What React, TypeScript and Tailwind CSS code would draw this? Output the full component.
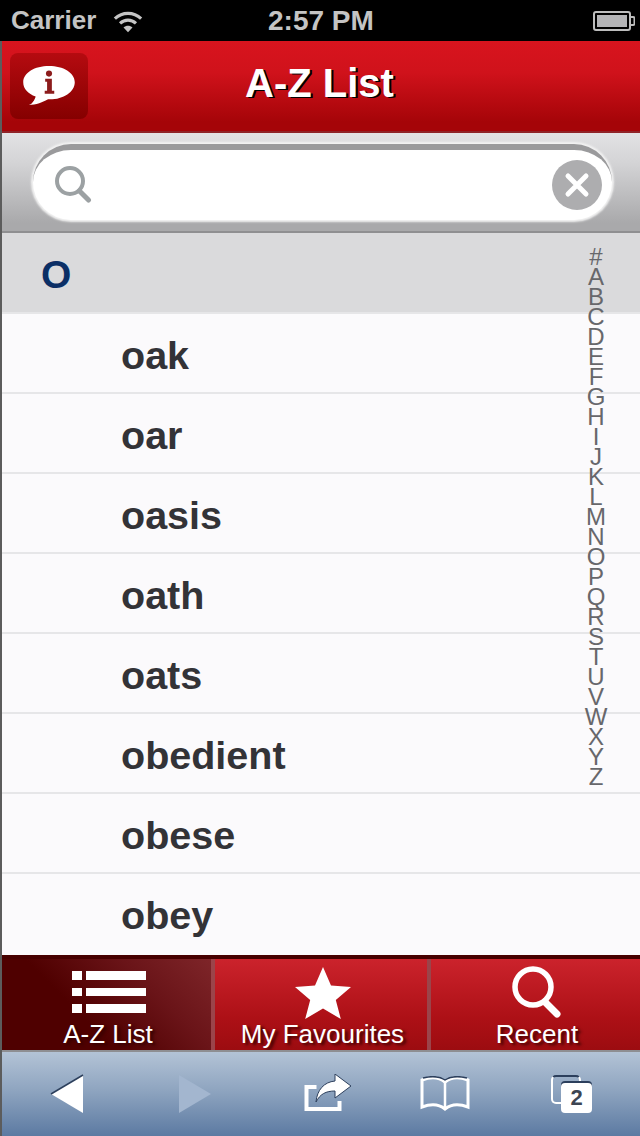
const words = ["oak", "oar", "oasis", "oath", "oats", "obedient", "obese", "obey"];
const letters = "#ABCDEFGHIJKLMNOPQRSTUVWXYZ".split("");

const sans = "font-['Liberation_Sans',Arial,sans-serif]";

function Wifi() {
  return (
    <svg width="30" height="24" viewBox="0 0 32 24" fill="none" stroke="#c4c4c4" strokeWidth="3.4">
      <path d="M2 9.5C10 2 22 2 30 9.5" />
      <path d="M7.5 14.5C12.5 10 19.5 10 24.5 14.5" />
      <path d="M16 24l-4.800-5.200C14 16.400 18 16.400 20.800 18.800z" fill="#c4c4c4" stroke="none" />
    </svg>
  );
}

function Battery() {
  return (
    <svg width="42" height="22" viewBox="0 0 42 22">
      <rect x="1" y="2" width="36" height="18" rx="2" fill="none" stroke="#bdbdbd" strokeWidth="2" />
      <rect x="4" y="5" width="30" height="12" fill="#b4b4b6" />
      <path d="M38 7h2a1.500 1.500 0 0 1 1.500 1.500v5A1.500 1.500 0 0 1 40 15h-2" fill="none" stroke="#bdbdbd" strokeWidth="2" />
    </svg>
  );
}

function InfoBubble() {
  return (
    <svg width="54" height="42" viewBox="0 0 56 44">
      <path d="M28 1C13 1 1 8 1 18c0 7 5 12 13 15-1 4-4 8-7 9 7 0 15-3 20-6 1 0 1 0 2 0 14 0 26-8 26-18S43 1 28 1z" fill="#fff" />
      <circle cx="28" cy="9" r="3.200" fill="#8c1c1c" />
      <path d="M24 14.500h7V27h2.500v3h-10v-3H26V17.500h-2z" fill="#8c1c1c" />
    </svg>
  );
}

function SearchGlass() {
  return (
    <svg width="38" height="40" viewBox="0 0 38 40" fill="none" stroke="#9ca1a3">
      <circle cx="16" cy="16" r="13" strokeWidth="4" />
      <path d="M25.500 26l9 9" strokeWidth="5" strokeLinecap="round" />
    </svg>
  );
}

function ClearButton() {
  return (
    <div className="flex h-[50px] w-[50px] items-center justify-center rounded-full bg-[#adadaf]">
      <svg width="30" height="30" viewBox="0 0 30 30" stroke="#fff" strokeWidth="5" strokeLinecap="round">
        <path d="M6 6l18 18M24 6L6 24" />
      </svg>
    </div>
  );
}

function ListIcon() {
  return (
    <svg className="ml-[3px]" width="76" height="44" viewBox="0 0 76 44" fill="#fff">
      <rect x="0" y="0" width="10" height="9" />
      <rect x="14" y="0" width="60" height="9" />
      <rect x="0" y="17" width="10" height="8" />
      <rect x="14" y="17" width="60" height="8" />
      <rect x="0" y="33" width="10" height="9" />
      <rect x="14" y="33" width="60" height="9" />
    </svg>
  );
}

function StarIcon() {
  return (
    <svg width="56" height="52" viewBox="0 0 56 52" fill="#fff">
      <path d="M28 0l8 18.500 20 1.500-15.200 13 5 19L28 41.500 10.200 52l5-19L0 20l20-1.500z" />
    </svg>
  );
}

function GlassIcon() {
  return (
    <svg width="50" height="54" viewBox="0 0 50 54" fill="none" stroke="#fff">
      <circle cx="21" cy="21" r="18" strokeWidth="5.500" />
      <path d="M33 36l12 12" strokeWidth="7" strokeLinecap="round" />
    </svg>
  );
}

function TabButton({ label, icon, active, className }: { label: string; icon: React.ReactNode; active?: boolean; className: string }) {
  return (
    <div
      className={`flex flex-col items-center justify-end pb-[1px] pl-[3px] ${className} ${
        active
          ? "bg-[linear-gradient(225deg,#7e2529_0%,#6a1418_30%,#4f0000_62%)]"
          : "bg-[linear-gradient(to_bottom,#cb232c,#ad1016_65%,#9c0c10)]"
      }`}
    >
      <div className="flex h-[52px] items-center justify-center">{icon}</div>
      <span className="text-[26px] leading-[30px] text-white [text-shadow:3px_2px_3px_rgba(50,0,0,0.9)]">{label}</span>
    </div>
  );
}

export default function App() {
  return (
    <div className={`flex h-[1136px] w-[640px] flex-col overflow-hidden bg-[#fbfafc] ${sans}`}>
      {/* status bar */}
      <div className="flex h-[41px] shrink-0 items-center bg-black pl-[11px] pr-[5px] font-bold text-[#c4c4c4]">
        <div className="flex w-[257px] items-center gap-[17px] text-[26px]">
          <span>Carrier</span>
          <Wifi />
        </div>
        <span className="text-[28px]">2:57 PM</span>
        <div className="flex-1" />
        <Battery />
      </div>

      <div className="flex flex-1 flex-col border-l-2 border-[#5c5c5c]">
        {/* header */}
        <div className="relative flex h-[92px] shrink-0 items-center justify-center border-b-2 border-[#8f2328] bg-[linear-gradient(to_bottom,#d8141e,#d0121b_35%,#a50408_90%)]">
          <div className="absolute left-[8px] top-[12px] flex h-[66px] w-[78px] items-center justify-center rounded-[8px] bg-[linear-gradient(to_bottom,#b50b10,#850000)]">
            <InfoBubble />
          </div>
          <span className="ml-[-3px] mt-[-6px] text-[40px] font-bold text-white [text-shadow:2px_1px_0_#000]">A-Z List</span>
        </div>

        {/* search */}
        <div className="flex h-[100px] shrink-0 items-center border-b-2 border-[#8f8f91] bg-[linear-gradient(to_bottom,#e2e2e4,#d4d4d6_30%,#a9a9ab_92%)] pl-[31px] pr-[28px]">
          <div className="flex h-[76px] w-full items-center justify-between rounded-[38px] border-t-[6px] border-[#9a9a9c] bg-white pl-[21px] pr-[10px] shadow-[0_0_2px_2px_#f2f2f2]">
            <SearchGlass />
            <ClearButton />
          </div>
        </div>

        {/* list */}
        <div className="relative flex-1 overflow-hidden">
          <div className="flex h-[79px] items-center bg-[#dadadc] pl-[39px] pt-[6px] text-[39px] font-bold text-[#0b2f66]">O</div>
          {words.map((w) => (
            <div key={w} className="flex h-[80px] items-center border-t-2 border-[#e6e6e8] pl-[119px] pt-[6px] text-[39.5px] font-bold text-[#333337]">
              {w}
            </div>
          ))}
          <div className="absolute right-[32px] top-[14px] flex w-[24px] flex-col items-center text-[24px] leading-[20px] text-[#67676b]">
            {letters.map((l) => (
              <span key={l} className="h-[20px]">{l}</span>
            ))}
          </div>
        </div>

        {/* tabs */}
        <div className="flex h-[95px] shrink-0 gap-[4px] border-t-[4px] border-[#470000] bg-[#9b444a]">
          <TabButton className="w-[209px]" active label="A-Z List" icon={<ListIcon />} />
          <TabButton className="w-[212px]" label="My Favourites" icon={<StarIcon />} />
          <TabButton className="flex-1" label="Recent" icon={<GlassIcon />} />
        </div>

        {/* browser bar */}
        <div className="flex h-[86px] shrink-0 items-center border-t-2 border-[#8e8e92] bg-[linear-gradient(to_bottom,#b3c3d6,#8fa5c0_45%,#5c7aa2)] pl-[48px]">
          <svg width="34" height="40" viewBox="0 0 34 40">
            <path d="M33 1L1 20l32 19z" fill="#fff" />
            <path d="M33 1L1 20" stroke="#2c3f5c" strokeWidth="1.500" />
          </svg>
          <svg className="ml-[94px]" width="34" height="40" viewBox="0 0 34 40">
            <path d="M1 1l32 19L1 39z" fill="#a3b6cf" />
          </svg>
          <svg className="ml-[90px]" width="50" height="40" viewBox="0 0 50 40" fill="none">
            <path d="M2.500 11h12v4h-8v18h29v-6h4v10h-37z" fill="#fff" />
            <path d="M33 0l16 12-16 12v-7c-9 0-15 3-19 11 1-12 8-20 19-21z" fill="#fff" stroke="#2c3f5c" strokeWidth="1" />
          </svg>
          <svg className="ml-[68px]" width="50" height="36" viewBox="0 0 50 36" fill="none">
            <path d="M2 4c8-3 17-3 23 2 6-5 15-5 23-2v27c-8-3-17-3-23 2-6-5-15-5-23-2z" stroke="#fff" strokeWidth="3" />
            <path d="M25 6v26" stroke="#fff" strokeWidth="2.500" />
            <path d="M3 2c8-2 16-2 22 2 6-4 14-4 22-2" stroke="#2c3f5c" strokeWidth="1.500" />
          </svg>
          <div className="relative ml-[81px] h-[38px] w-[42px]">
            <div className="absolute left-0 top-0 h-[29px] w-[30px] rounded-[5px] border-2 border-t-[#2c3f5c] border-x-white border-b-white" />
            <div className="absolute left-[10px] top-[8px] flex h-[30px] w-[31px] items-center justify-center rounded-[4px] bg-white text-[22px] font-bold leading-none text-[#3d4552] shadow-[0_-2px_0_#2c3f5c]">
              2
            </div>
          </div>
        </div>
      </div>
    </div>
  );
}
